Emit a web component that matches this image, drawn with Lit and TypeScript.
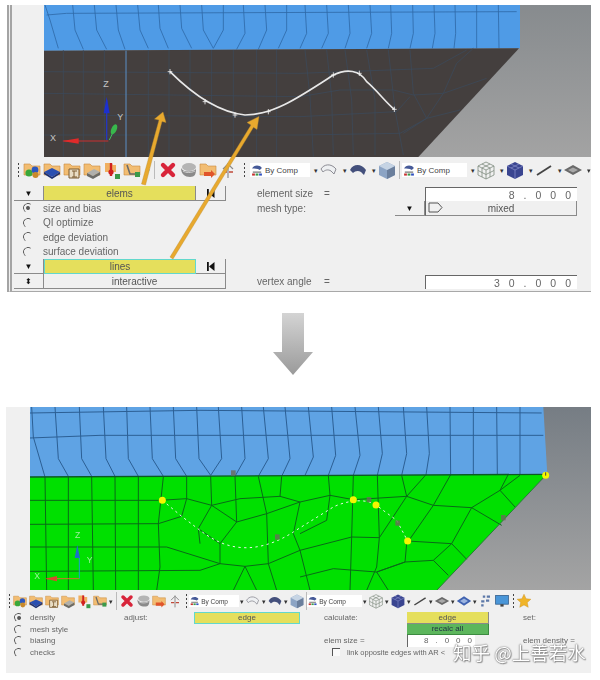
import { LitElement, html, css, svg } from 'lit';
import { customElement } from 'lit/decorators.js';

// mesh coordinates are 3x page pixels, that's how they were read off the shot
const topBlue = [
  '140,45 200,40 1550,35',
  '135,15 150,60 175,145', '218,15 225,90 250,148', '283,15 290,90 320,148', '348,15 355,90 375,148',
  '413,15 420,90 445,145', '475,15 480,85 505,145', '540,15 545,85 575,145', '605,15 610,90 640,145',
  '670,15 670,90 640,145', '730,15 735,100 710,148', '795,15 800,90 775,148', '860,15 860,90 835,145',
  '915,15 920,100 900,145', '980,15 985,100 965,145', '1045,15 1050,100 1035,145', '1110,15 1115,100 1100,145',
  '1172,15 1175,100 1165,145', '1238,15 1240,100 1230,145', '1302,15 1305,100 1297,145', '1365,15 1367,100 1362,145',
  '1430,15 1430,145', '1495,15 1497,145',
];
const topDark = [
  '190,150 190,470', '250,150 250,470', '313,150 313,470', '445,150 445,470', '507,150 507,470', '570,150 570,470',
  '635,150 635,470', '700,150 700,470', '770,150 770,470', '830,150 830,470',
  '132,215 900,220 1300,205 1400,150', '132,280 900,290 1020,270 1180,270 1240,285 1330,280 1460,235',
  '132,345 900,350 1190,335 1230,290', '132,405 900,405 1200,400 1280,355 1380,330',
  '915,150 930,290 940,470', '980,150 995,290 1000,465', '1035,150 1055,300 1060,465', '1100,150 1125,300 1125,465',
  '1165,150 1185,330 1210,465', '1230,150 1240,280 1280,355 1330,280 1370,190 1420,145', '1280,355 1210,400',
];
const lowBlue = [
  '90,38 600,30 1625,38', '90,113 300,105 1630,105',
  '95,20 100,110 135,230', '165,20 175,175 205,228', '238,20 245,175 275,228', '310,20 318,175 345,228',
  '380,20 385,175 415,228', '450,20 457,175 490,228', '520,20 527,175 560,228', '590,20 597,175 632,225',
  '655,20 665,175 632,225', '725,20 735,175 705,228', '790,20 805,175 775,228', '855,20 870,175 845,228',
  '925,20 940,170 915,225', '995,20 1007,165 985,225', '1065,20 1080,165 1060,225', '1135,20 1147,160 1132,225',
  '1210,20 1220,160 1205,225', '1280,20 1288,160 1278,223', '1350,20 1352,223', '1420,20 1420,222', '1490,20 1492,222', '1560,20 1560,222',
];
const lowGreen = [
  '135,230 140,570', '205,230 205,570', '275,230 280,570', '345,230 347,570', '415,230 415,570',
  '490,230 475,370 480,500 470,570', '560,230 560,295', '632,228 635,315', '705,228 710,365',
  '775,228 800,340 805,490', '845,228 840,288',
  '90,300 480,300 560,295 635,315 720,295 840,288 900,305 990,285 1060,298 1220,288 1300,315 1415,322 1500,270 1560,225',
  '90,372 475,370 545,348', '90,440 500,440 660,490 735,498 805,490 900,450 1055,410 1138,412',
  '90,513 600,510 660,490', '560,295 545,348', '635,315 595,385 600,430', '635,315 710,365 660,430 595,385',
  '710,365 800,340 900,305', '660,430 660,490', '735,498 700,570', '735,498 770,570', '805,490 830,570',
  '900,305 880,400 900,450 930,570', '985,225 990,285 980,360 900,400', '1060,225 1055,410 1050,570',
  '1132,225 1138,412 1130,500 1100,570', '1205,225 1220,288 1138,412', '1278,223 1220,288', '1352,223 1300,315 1220,430 1215,485 1130,515',
  '1223,422 1355,430 1415,322', '1415,322 1505,375', '1355,430 1300,480 1215,485', '1355,430 1400,477',
  '1500,270 1525,222', '1500,270 1545,320', '1300,480 1345,525', '1215,485 1130,515 1000,505 900,530', '1130,515 1165,570',
];

const ticks1 = [[510, 215], [615, 305], [705, 345], [805, 335], [1000, 225], [1078, 220], [1183, 328]];
const dots2 = [[487, 300], [1060, 298], [1128, 314], [1223, 422], [1637, 225]];
const marks2 = [[700, 218], [832, 410], [1107, 298], [1193, 368], [1510, 352]];

const lines = (pts: string[], color: string, w: number) =>
  pts.map((p) => svg`<polyline points=${p} fill="none" stroke=${color} stroke-width=${w}></polyline>`);

const folder = svg`<path d="M2 6V4h6l2 2h8v9H2z" fill="#f2bd72" stroke="#c98a3c" stroke-width=".6"></path>`;

const icons: Record<string, unknown> = {
  spheres: svg`${folder}<circle cx="7" cy="13" r="3.6" fill="#3aa83a"></circle><circle cx="13" cy="10" r="3.4" fill="#2c58c0"></circle><circle cx="13.5" cy="15" r="3" fill="#c8892c"></circle>`,
  blue: svg`${folder}<path d="M2 12l8-4 8 4-8 5z" fill="#2a4fb0"></path><path d="M2 12v2l8 5 8-5v-2l-8 5z" fill="#1c2f70"></path>`,
  table: svg`${folder}<path d="M7 9h10v9H7z" fill="#e8dcc4" stroke="#7a5a30"></path><path d="M10 11h5M12 11v6M10 17h5" stroke="#7a5a30" fill="none"></path>`,
  block: svg`${folder}<path d="M5 13l7-4 6 3-7 4z" fill="#b0b0ac"></path><path d="M5 13v3l6 3 7-4v-3l-7 4z" fill="#6c6c68"></path>`,
  pin: svg`<path d="M3 6V3h6l2 2h3v7H3z" fill="#f0b060"></path><path d="M9 3v13" stroke="#d02020" stroke-width="2.4"></path><circle cx="9" cy="12" r="2.6" fill="#d02020"></circle><rect x="13" y="14" width="5" height="5" fill="#3a9a4a"></rect>`,
  line: svg`${folder}<path d="M5 5l3 9h6" stroke="#6a6a6a" stroke-width="1.6" fill="none"></path><rect x="13" y="12" width="5" height="5" fill="#3a9a4a"></rect>`,
  x: svg`<path d="M5 5l10 10M15 5L5 15" stroke="#d8243a" stroke-width="4.4" stroke-linecap="round"></path>`,
  stack: svg`<ellipse cx="11" cy="7" rx="7" ry="4" fill="#b4b4b4"></ellipse><path d="M3 8c0 6 4 9 9 9s6-3 6-8c-2 3-13 4-15-1z" fill="#8a8a8a"></path><path d="M5 11c3 2 8 2 12 0" stroke="#d0d0d0" fill="none"></path>`,
  orange: svg`${folder}<path d="M6 12h7v-2l4 4-4 4v-2H6z" fill="#e0542a"></path>`,
  branch: svg`<path d="M10 3v15M5 9l5-5 5 5" stroke="#8a8a8a" stroke-width="1.2" fill="none"></path><path d="M5 12h4M11 12h4" stroke="#c04a3a" stroke-width="1.4"></path>`,
  comp: svg`<path d="M3 8c2-5 10-6 14-1l-3 3c-4-2-7-2-11-2z" fill="#465a98"></path><path d="M4 13h12" stroke="#666" stroke-width="1.6"></path><rect x="3" y="15" width="4" height="3" fill="#c83030"></rect><rect x="8" y="15" width="4" height="3" fill="#3a9a4a"></rect><rect x="13" y="15" width="4" height="3" fill="#3050c0"></rect>`,
  outline: svg`<path d="M2 9c3-5 10-6 15 0l-2 5-3-3c-3-2-6-1-8 1z" fill="#eef0f2" stroke="#8c8c94"></path>`,
  arc: svg`<path d="M2 10c3-6 11-7 16 0l-2 5-3-3c-3-2-6-1-8 1z" fill="#44507c"></path>`,
  cube: svg`<path d="M10 2l8 4v9l-8 4-8-4V6z" fill="#8ca4c4"></path><path d="M10 10l8-4v9l-8 4z" fill="#6b7f9c"></path><path d="M2 6l8-4 8 4-8 4z" fill="#c6d4e4"></path>`,
  wire: svg`<path d="M10 2l8 4v9l-8 4-8-4V6zM2 6l8 4 8-4M10 10v9M6 4l8 4v9M14 4L6 8v9M2 10.500l8 4 8-4" fill="none" stroke="#7e8a7e" stroke-width=".8"></path>`,
  navy: svg`<path d="M10 2l8 4v9l-8 4-8-4V6z" fill="#3a4590"></path><path d="M2 6l8 4 8-4M10 10v9M6 4l8 4M14 4L6 8" fill="none" stroke="#8088c8" stroke-width=".8"></path>`,
  slash: svg`<path d="M3 15L17 6" stroke="#444" stroke-width="1.8"></path>`,
  flat: svg`<path d="M1 10l9-5 9 5-9 5z" fill="#6a6a6a"></path><path d="M5 10l5-2.500 5 2.500-5 2.500z" fill="#a8a8a8"></path>`,
  flatblue: svg`<path d="M1 10l9-6 9 6-9 6z" fill="#3f62b0"></path><path d="M5 10l5-3 5 3-5 3z" fill="#9cb4e0"></path>`,
  grid: svg`<path d="M6 3h3v3H6zM11 3h4v3h-4zM4 9h4v3H4zM10 8h4v3h-4zM4 14h3v3H4z" fill="#5c78a8"></path>`,
  monitor: svg`<rect x="2" y="3" width="16" height="11" fill="#4a96d8" stroke="#35608c"></rect><path d="M8 14v3h4v-3" fill="#444"></path>`,
  star: svg`<path d="M10 1.500l2.600 5.600 6 .7-4.500 4.100 1.200 6-5.300-3-5.300 3 1.200-6L1.400 7.800l6-.7z" fill="#f0b428" stroke="#c88a18" stroke-width=".5"></path>`,
};

const bar1 = 'grip spheres blue table block pin line caret sep x stack orange branch grip2 combo caret outline caret arc caret cube sep2 combo caret wire caret navy caret slash caret flat caret'.split(' ');
const bar2 = 'grip spheres blue table block pin line caret sep x stack orange branch grip2 combo caret outline caret arc caret cube sep2 combo caret wire caret navy caret slash caret flat caret flatblue caret grid monitor grip2 star'.split(' ');

@customElement('app-root')
export class AppRoot extends LitElement {
  static styles = css`
    :host {
      display: block;
      width: 600px;
      height: 680px;
      overflow: hidden;
      background: #fff;
      padding-top: 5px;
      box-sizing: border-box;
      font-family: 'Liberation Sans', Arial, sans-serif;
      color: #666;
    }

    .panel {
      position: relative;
      background: #f0f0f0;
      filter: blur(0.55px);
    }

    .panel.first {
      margin-left: 7px;
      width: 584px;
      box-sizing: border-box;
      border-left: 5px double #a4a4a4;
      border-bottom: 1px solid #a8a8a8;
      font-size: 10px;
      height: 287px;
    }

    .panel.second {
      margin-left: 6px;
      width: 585px;
      height: 266px;
      font-size: 8px;
    }

    .view {
      display: block;
    }

    .first .view {
      margin-left: 32px;
      width: 547px;
      height: 152px;
    }

    .second .view {
      margin-left: 24px;
      width: 561px;
      height: 183px;
    }

    .tools {
      display: flex;
      align-items: center;
    }

    .first .tools {
      height: 26px;
      padding-left: 2px;
      --icon: 20px;
      --caret: 11px;
      --combo: 60px;
    }

    .second .tools {
      height: 22px;
      padding-left: 0;
      --icon: 16px;
      --caret: 6px;
      --combo: 50px;
    }

    .ic {
      width: var(--icon);
      height: var(--icon);
      flex: none;
    }

    .ic svg,
    .combo svg {
      display: block;
      width: 100%;
      height: 100%;
    }

    .caret {
      width: var(--caret);
      flex: none;
      text-align: center;
      font-size: 7px;
      line-height: 7px;
      color: #333;
    }

    .first .tools .caret {
      margin-right: -2px;
    }

    .grip {
      flex: none;
      width: 8px;
      height: 16px;
      background: radial-gradient(circle, #444 0.8px, transparent 1.1px) center top / 3px 4px repeat-y;
    }

    .grip2 {
      flex: none;
      width: 12px;
      height: 16px;
      background: radial-gradient(circle, #444 0.8px, transparent 1.1px) center top / 3px 4px repeat-y;
    }

    .second .grip {
      width: 6px;
    }

    .second .grip2 {
      width: 6px;
    }

    .sep {
      flex: none;
      width: 7px;
      height: 18px;
      background: linear-gradient(#bbb, #bbb) center / 1px 100% no-repeat;
    }

    .second .sep {
      width: 5px;
    }

    .sep2 {
      flex: none;
      width: 5px;
      height: 18px;
      background: linear-gradient(#bbb, #bbb) center / 1px 100% no-repeat;
    }

    .second .sep2 {
      width: 2px;
    }

    .combo {
      flex: none;
      display: flex;
      align-items: center;
      gap: 1px;
      box-sizing: border-box;
      width: var(--combo);
      background: #fff;
      color: #444;
      font-size: 8px;
      white-space: nowrap;
    }

    .sep2 + .combo {
      width: calc(var(--combo) + 5px);
    }

    .combo i {
      display: block;
      width: calc(var(--icon) * 0.7);
      height: calc(var(--icon) * 0.7);
      flex: none;
    }

    .second .combo {
      font-size: 6.5px;
    }

    .form {
      display: grid;
      grid-template-columns: 212px 1fr;
      column-gap: 31px;
      padding: 3px 14px 3px 2px;
      height: 102px;
    }

    .stack {
      display: flex;
      flex-direction: column;
    }

    .tri {
      display: grid;
      grid-template-columns: 30px 152px 30px;
      height: 15px;
    }

    .btn {
      box-sizing: border-box;
      display: flex;
      align-items: center;
      justify-content: center;
      border-right: 1px solid #8a8a8a;
      border-bottom: 1px solid #8a8a8a;
      color: #555;
      white-space: nowrap;
    }

    .btn.hi {
      background: #e5df5c;
    }

    .btn.cy {
      background: #e5df5c;
      border: 1px solid #62d8cc;
    }

    .btn.go {
      background: #5cb65c;
      border-color: #3c8a40;
      color: #234;
    }

    .arrow {
      font-size: 8px;
      color: #111;
    }

    .skip {
      width: 9px;
      height: 9px;
    }

    .radios {
      height: 58px;
      display: grid;
      grid-auto-rows: 14.5px;
    }

    .radio {
      display: flex;
      align-items: center;
      gap: 10px;
      padding-left: 9px;
      white-space: nowrap;
    }

    .radio b {
      position: relative;
      display: block;
      flex: none;
      box-sizing: border-box;
      width: 10px;
      height: 10px;
      border-radius: 50%;
      border: 1px solid transparent;
      border-top-color: #555;
      border-left-color: #555;
      transform: rotate(-10deg);
    }

    .radio b.on::after {
      content: '';
      position: absolute;
      left: 2px;
      top: 2px;
      width: 4px;
      height: 4px;
      border-radius: 50%;
      background: #555;
    }

    .right {
      display: flex;
      flex-direction: column;
      justify-content: space-between;
    }

    .field {
      display: grid;
      grid-template-columns: 138px 30px 152px;
      height: 15px;
      align-items: center;
    }

    .name {
      display: inline-block;
      width: 67px;
    }

    .num {
      box-sizing: border-box;
      height: 14px;
      background: #fff;
      border-top: 1px solid #666;
      border-left: 1px solid #666;
      text-align: right;
      line-height: 14px;
      grid-column: 3;
      letter-spacing: 9px;
      font-size: 10.5px;
      padding-right: 0;
    }

    .num span {
      margin-right: -3px;
    }

    .mixed {
      position: relative;
      border-left: 1px solid #666;
      height: 15px;
    }

    .tag {
      position: absolute;
      left: 2px;
      top: 1px;
      width: 15px;
      height: 11px;
    }

    .dd {
      height: 15px;
    }

    .chevron {
      display: block;
      width: 293px;
      height: 62px;
      margin: 21px 0 32px;
    }

    .chevron svg {
      display: block;
      margin-left: 273px;
    }

    .over {
      position: absolute;
      left: -5px;
      top: 0;
      pointer-events: none;
    }

    .low {
      display: grid;
      grid-template-columns: 111px 70px 106px 24px 83px 82px 34px 68px;
      grid-template-rows: repeat(4, 11.5px);
      padding-left: 7px;
      align-items: center;
    }

    .low .radios {
      grid-row: 1 / 5;
      height: auto;
      grid-auto-rows: 11.5px;
    }

    .low .radio {
      padding-left: 0;
      gap: 7px;
    }

    .low .radio b {
      width: 9px;
      height: 9px;
      margin-left: 1px;
    }

    .low .radio b.on::after {
      left: 1.5px;
      top: 1.5px;
    }

    .low .btn {
      height: 11.5px;
    }

    .c2 {
      grid-column: 2;
      grid-row: 1;
    }

    .c3 {
      grid-column: 3;
      grid-row: 1;
    }

    .c5 {
      grid-column: 5;
    }

    .c6 {
      grid-column: 6;
    }

    .c8 {
      grid-column: 8;
      white-space: nowrap;
    }

    .small-num {
      box-sizing: border-box;
      width: 68px;
      height: 11.5px;
      background: #fff;
      border-left: 1px solid #666;
      font-size: 8px;
      letter-spacing: 7px;
      line-height: 11px;
      text-align: left;
      padding-left: 16px;
      white-space: nowrap;
    }

    .link {
      grid-column: 5 / -1;
      grid-row: 4;
      display: flex;
      align-items: center;
      gap: 7px;
      padding-left: 8px;
      font-size: 7.5px;
      white-space: nowrap;
    }

    .link i {
      display: block;
      box-sizing: border-box;
      width: 8px;
      height: 8px;
      border-top: 1px solid #555;
      border-left: 1px solid #555;
      background: #fafafa;
    }

    .mark {
      position: absolute;
      left: 447px;
      top: 231px;
      font-family: 'Noto Sans CJK SC', sans-serif;
      font-size: 18.5px;
      line-height: 28px;
      color: #fff;
      white-space: nowrap;
      text-shadow: 0 0 1px #666, 0 0 2px #888, 1px 1px 1px #999;
    }
  `;

  private renderBar(items: string[]) {
    return html`<div class="tools">
      ${items.map((it) => {
        if (it === 'caret') return html`<span class="caret">▾</span>`;
        if (it === 'grip' || it === 'grip2' || it === 'sep' || it === 'sep2') return html`<span class=${it}></span>`;
        if (it === 'combo') return html`<span class="combo"><i><svg viewBox="0 0 20 20">${icons.comp}</svg></i>By Comp</span>`;
        return html`<span class="ic"><svg viewBox="0 0 20 20">${icons[it]}</svg></span>`;
      })}
    </div>`;
  }

  private skip() {
    return html`<svg class="skip" viewBox="0 0 9 9"><path d="M1 0h1.800v9H1zM8.500 0v9L3 4.500z" fill="#111"></path></svg>`;
  }

  private radios(names: string[]) {
    return html`<div class="radios">
      ${names.map((n, i) => html`<label class="radio"><b class=${i === 0 ? 'on' : ''}></b>${n}</label>`)}
    </div>`;
  }

  private firstView() {
    return html`<svg class="view" viewBox="132 15 1641 456" preserveAspectRatio="none">
      <defs>
        <linearGradient id="g1" x1="0" y1="0" x2="0" y2="1">
          <stop offset="0" stop-color="#878b8e"></stop>
          <stop offset="1" stop-color="#a3a3a3"></stop>
        </linearGradient>
      </defs>
      <rect x="132" y="15" width="1641" height="456" fill="url(#g1)"></rect>
      <path d="M132 15H1560V145L132 152z" fill="#4f9be6"></path>
      ${lines(topBlue, '#2f6aa8', 2.5)}
      <path d="M132 152L1557 145 1255 471H132z" fill="#443f3e"></path>
      ${lines(topDark, '#3b4a5c', 2.2)}
      <path d="M378 152V471" stroke="#5b8fc5" stroke-width="3"></path>
      <path d="M510 215C560 265 640 335 735 345C820 345 900 290 1000 225C1040 205 1080 210 1100 245C1130 270 1160 310 1183 328" fill="none" stroke="#e8e8e8" stroke-width="5"></path>
      ${ticks1.map(([x, y]) => svg`<path d="M${x - 7} ${y}h14M${x} ${y - 8}v16" stroke="#f2f2f2" stroke-width="2.500"></path>`)}
      <path d="M320 420V300" stroke="#2436c0" stroke-width="4"></path>
      <path d="M320 290l9 50h-18z" fill="#1c30d0"></path>
      <path d="M325 423H190" stroke="#c83030" stroke-width="3"></path>
      <path d="M186 423l50-8v16z" fill="#e02a2a"></path>
      <path d="M328 420L345 385" stroke="#40c060" stroke-width="3"></path>
      <ellipse cx="342" cy="388" rx="8" ry="16" transform="rotate(25 342 388)" fill="#38b84c"></ellipse>
      <g fill="#c6c6c6" font-family="Liberation Sans, sans-serif" font-size="27">
        <text x="310" y="262">Z</text>
        <text x="352" y="360">Y</text>
        <text x="150" y="424">X</text>
      </g>
    </svg>`;
  }

  private secondView() {
    return html`<svg class="view" viewBox="90 20 1683 549" preserveAspectRatio="none">
      <defs>
        <linearGradient id="g2" x1="0" y1="0" x2="0" y2="1">
          <stop offset="0" stop-color="#767d84"></stop>
          <stop offset="1" stop-color="#a4a4a4"></stop>
        </linearGradient>
      </defs>
      <rect x="90" y="20" width="1683" height="549" fill="url(#g2)"></rect>
      <path d="M90 20H1630L1642 225L90 230z" fill="#5fa3e4"></path>
      ${lines(lowBlue, '#2c5f94', 3)}
      <path d="M90 230L1640 222 1310 570H90z" fill="#00e000"></path>
      ${lines(lowGreen, '#0a6a18', 3)}
      <path d="M90 230L1640 222" stroke="#0c5a24" stroke-width="4"></path>
      <path d="M1640 222L1310 570" stroke="#2a7a3a" stroke-width="3"></path>
      <path d="M487 300L545 348 600 390C640 420 680 440 730 442C790 445 850 415 880 395L1000 320C1030 305 1090 290 1128 314L1190 360 1223 422" fill="none" stroke="#e8f4e8" stroke-width="3" stroke-dasharray="7 10"></path>
      ${marks2.map(([x, y]) => svg`<rect x=${x - 7} y=${y - 8} width="14" height="16" fill="#6a6a5a" opacity=".8"></rect>`)}
      ${dots2.map(([x, y]) => svg`<circle cx=${x} cy=${y} r="10.500" fill="#f6f600"></circle>`)}
      <path d="M1637 216v10" stroke="#444" stroke-width="3"></path>
      <path d="M238 535V470" stroke="#1e9ad0" stroke-width="3"></path>
      <path d="M232 433l8 40h-16z" fill="#1c70c8"></path>
      <path d="M238 535H140" stroke="#d07030" stroke-width="3"></path>
      <path d="M135 535l36-8v16z" fill="#d84a30"></path>
      <g fill="#9ef09e" font-family="Liberation Sans, sans-serif" font-size="26">
        <text x="225" y="412">Z</text>
        <text x="260" y="488">Y</text>
        <text x="103" y="537">X</text>
      </g>
    </svg>`;
  }

  render() {
    return html`
      <section class="panel first">
        ${this.firstView()}
        ${this.renderBar(bar1)}
        <div class="form">
          <div class="stack">
            <div class="tri">
              <div class="btn arrow">▼</div>
              <div class="btn hi">elems</div>
              <div class="btn">${this.skip()}</div>
            </div>
            ${this.radios(['size and bias', 'QI optimize', 'edge deviation', 'surface deviation'])}
            <div class="tri">
              <div class="btn arrow">▼</div>
              <div class="btn cy">lines</div>
              <div class="btn">${this.skip()}</div>
            </div>
            <div class="tri">
              <div class="btn arrow">⬍</div>
              <div class="btn" style="grid-column: 2 / 4">interactive</div>
            </div>
          </div>
          <div class="right">
            <div>
              <div class="field">
                <div><span class="name">element size</span>=</div>
                <div class="num"><span>8.000</span></div>
              </div>
              <div class="field">
                <div>mesh type:</div>
                <div class="btn arrow dd">▼</div>
                <div class="btn mixed">
                  <svg class="tag" viewBox="0 0 15 11"><path d="M1 1h9l4 4.500-4 4.500H1z" fill="none" stroke="#555"></path></svg>
                  mixed
                </div>
              </div>
            </div>
            <div class="field">
              <div><span class="name">vertex angle</span>=</div>
              <div class="num"><span>30.000</span></div>
            </div>
          </div>
        </div>
        <svg class="over" width="584" height="287" viewBox="7 5 584 287">
          <g fill="#e8a92e" stroke="#b98a30" stroke-width=".4">
            <path d="M141.500 184L159 120l-4.500-1 8.500-7 3 10.500-4-1L145.500 185z"></path>
            <path d="M170 257L251 125l-4-2.500 12-6-2 13-3.500-2.200L173 259z"></path>
          </g>
        </svg>
      </section>

      <div class="chevron">
        <svg width="40" height="62" viewBox="0 0 40 62">
          <defs>
            <linearGradient id="ga" x1="0" y1="0" x2="0" y2="1">
              <stop offset="0" stop-color="#d4d4d4"></stop>
              <stop offset="1" stop-color="#9a9a9a"></stop>
            </linearGradient>
          </defs>
          <path d="M9 0H31V39H40L20 62 0 39H9z" fill="url(#ga)"></path>
        </svg>
      </div>

      <section class="panel second">
        ${this.secondView()}
        ${this.renderBar(bar2)}
        <div class="low">
          ${this.radios(['density', 'mesh style', 'biasing', 'checks'])}
          <div class="c2">adjust:</div>
          <div class="btn cy c3">edge</div>
          <div class="c5" style="grid-row: 1">calculate:</div>
          <div class="btn hi c6" style="grid-row: 1">edge</div>
          <div class="c8" style="grid-row: 1">set:</div>
          <div class="btn hi go c6" style="grid-row: 2">recalc all</div>
          <div class="c5" style="grid-row: 3">elem size =</div>
          <div class="small-num c6" style="grid-row: 3">8.000</div>
          <div class="c8" style="grid-row: 3">elem density =</div>
          <div class="link"><i></i>link opposite edges with AR &lt;</div>
        </div>
        <div class="mark">知乎 @上善若水</div>
      </section>
    `;
  }
}
